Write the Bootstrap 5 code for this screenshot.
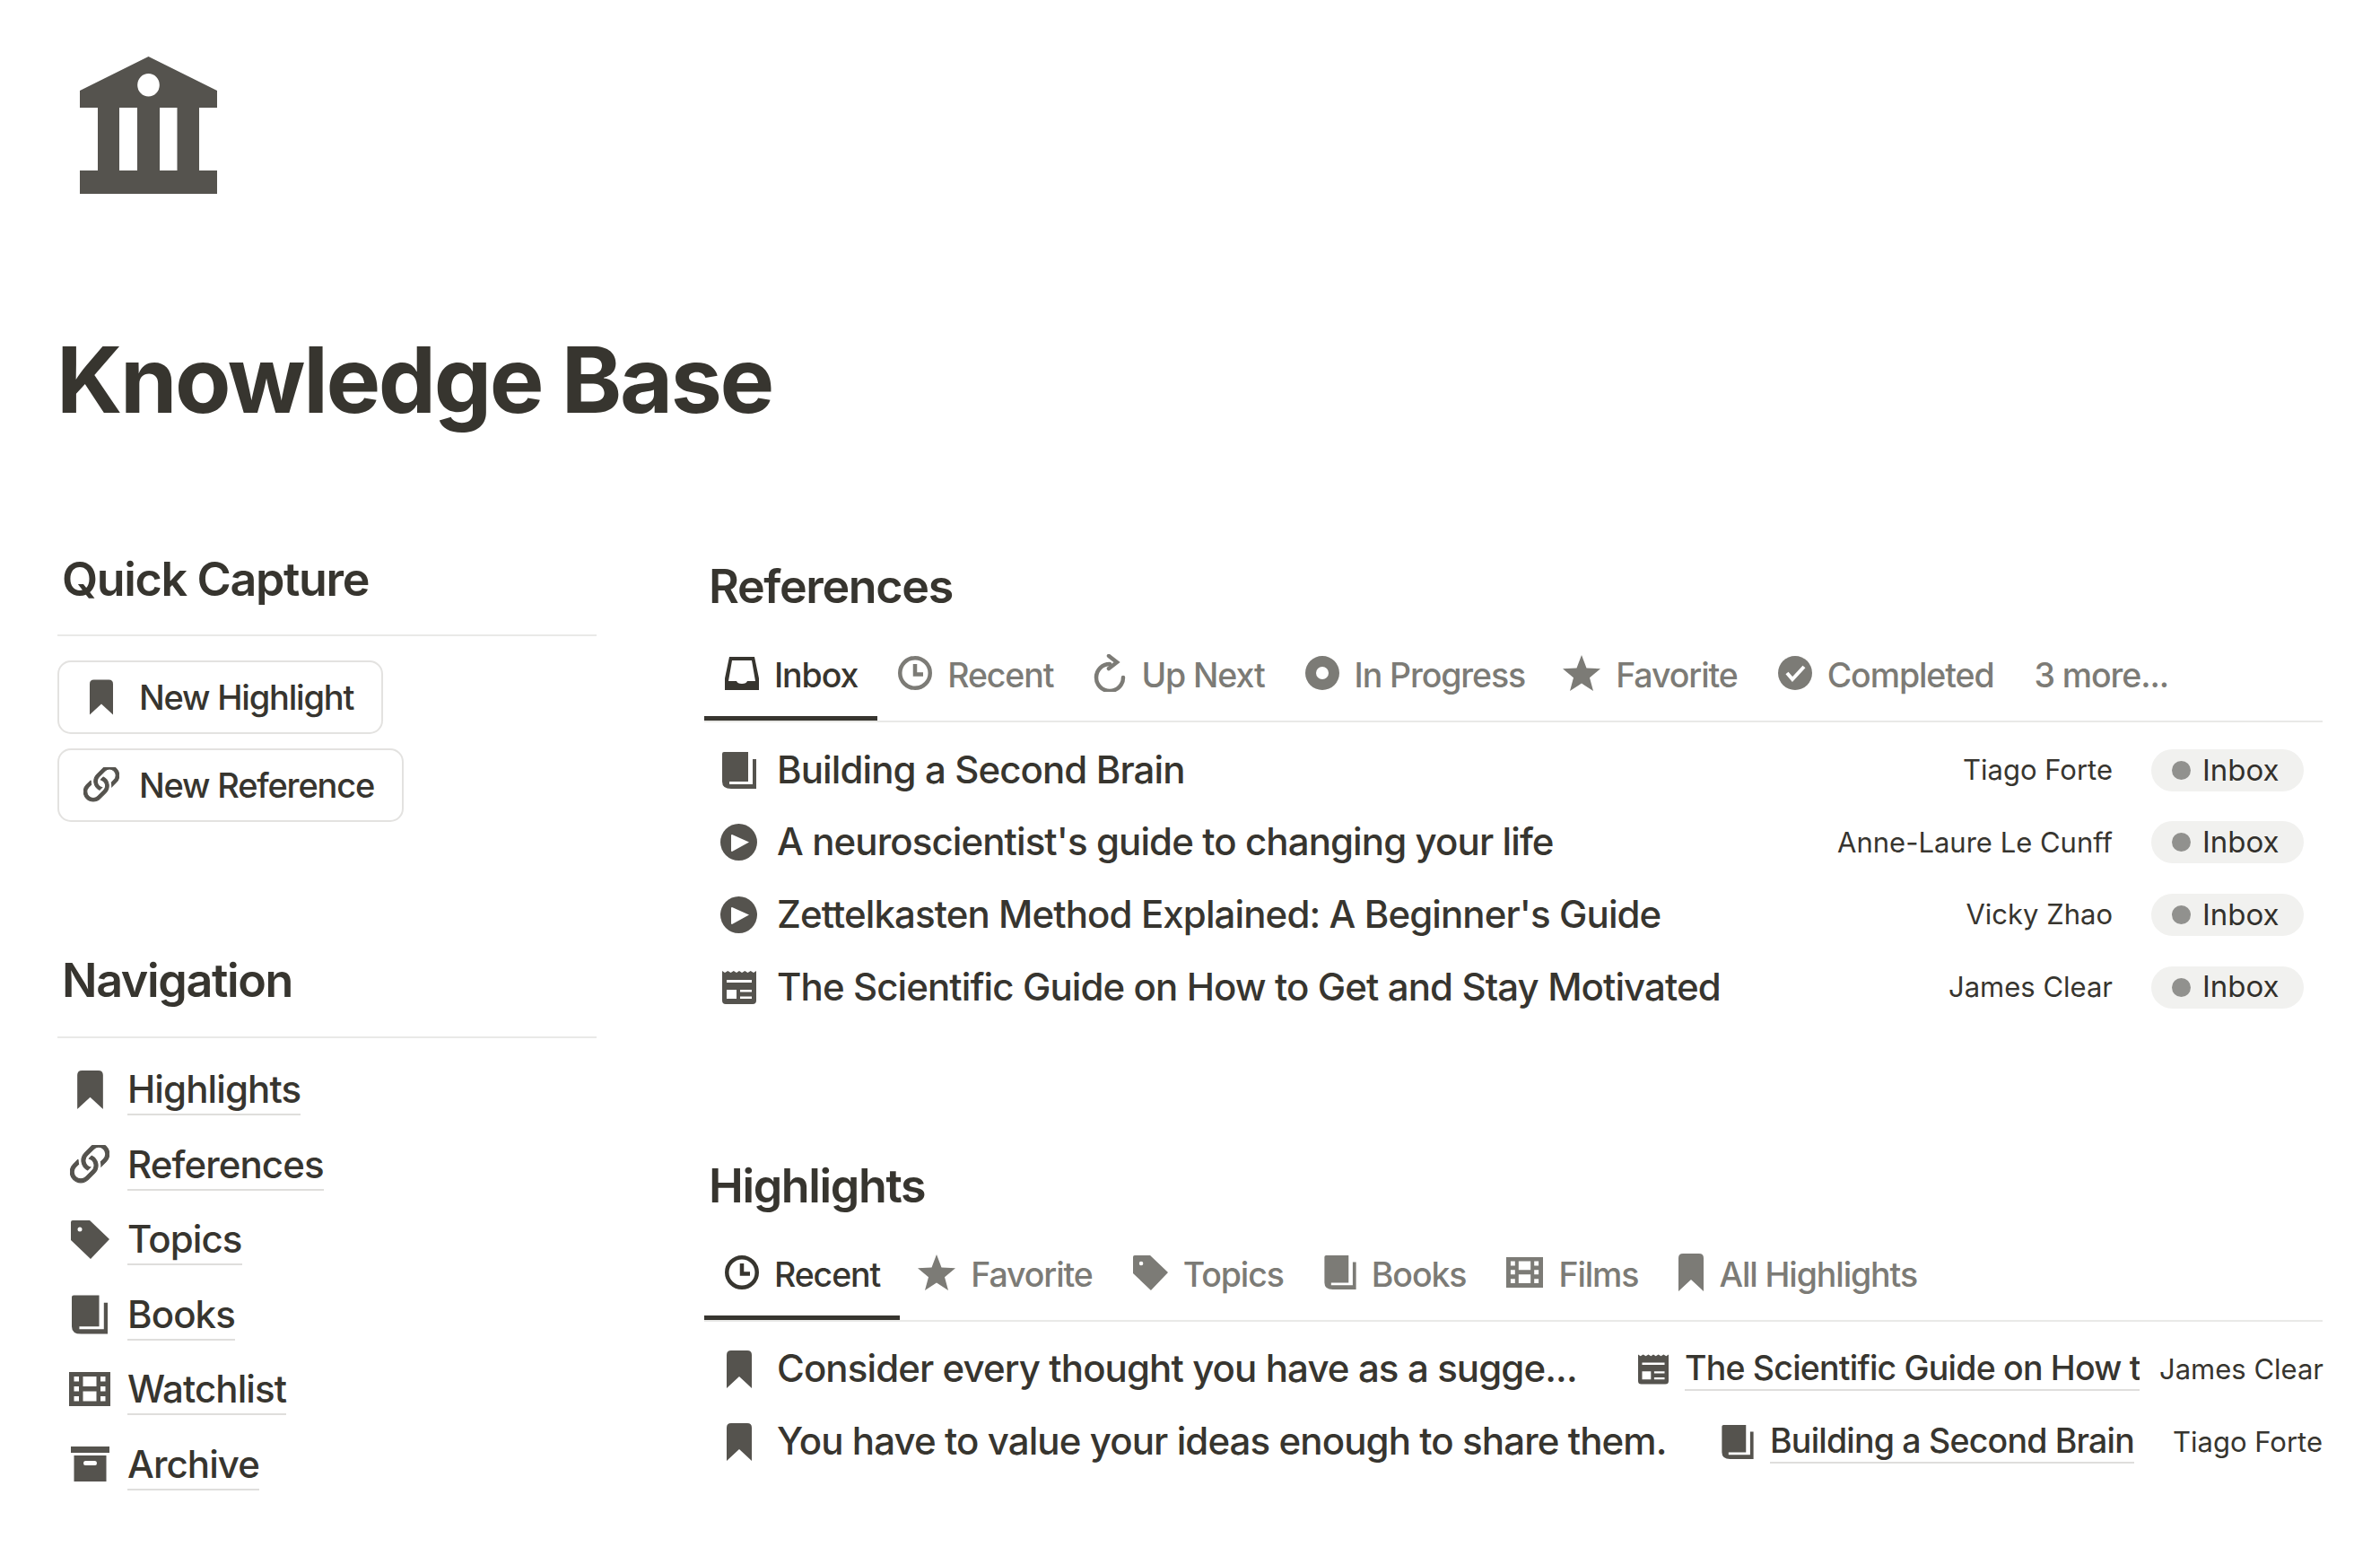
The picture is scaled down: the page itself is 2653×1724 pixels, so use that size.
<!DOCTYPE html>
<html lang="en">
<head>
<meta charset="utf-8">
<title>Knowledge Base</title>
<link href="https://cdn.jsdelivr.net/npm/bootstrap@5.3.0/dist/css/bootstrap.min.css" rel="stylesheet">
<style>
body{font-family:Inter,"Liberation Sans",sans-serif;color:#37352f;background:#fff;overflow:hidden}
a{color:inherit;text-decoration:none}
.kb-page{padding:63px 64px 0}
.kb-logo{display:block;margin-left:25px;color:#55534e}
.kb-title{font-size:102px;line-height:122px;font-weight:700;letter-spacing:-2.4px;margin:146px 0 132px -1px}
.kb-main{gap:120px}
.kb-left{width:601px;flex:none}
.kb-right{flex:1;min-width:0;padding-top:8px}
.kb-head{font-size:52px;line-height:60px;font-weight:600;letter-spacing:-1.35px;margin:0;padding-left:5px}
.kb-rule{border-top:2px solid #e9e9e7;margin:31px 0 27px}
.kb-rule-nav{margin:32px 0 32px}
.kb-btn{display:inline-flex;align-items:center;height:82px;padding:0 31px 0 26px;border:2px solid #e3e2e0;border-radius:15px;color:#37352f;font-size:38px;font-weight:500;letter-spacing:-1.2px;gap:21px;background:#fff}
.kb-btn:hover{color:#37352f;border-color:#e3e2e0}
.kb-ico{width:42px;display:flex;justify-content:center;align-items:center;flex:none;color:#55534e}
.kb-nav-head{margin-top:147px}
.kb-nav-row{height:83.6px;display:flex;align-items:flex-start;padding-left:12px;gap:18px}
.kb-nav-ico{width:48px;height:50px;display:flex;justify-content:center;align-items:center;color:#55534e;flex:none}
.kb-nav-link{font-size:42px;line-height:50px;font-weight:500;letter-spacing:-.9px;border-bottom:2px solid #dfdedc;padding-bottom:2px}
.kb-bar{border-bottom:2px solid #e9e9e7;height:99px;margin-top:22px;flex-wrap:nowrap}
.kb-tab{height:97px;padding:2px 22px 0 23px;display:flex;align-items:center;gap:17px;font-size:37.5px;font-weight:500;letter-spacing:-1.1px;color:#7c7b76;border-bottom:5px solid transparent;white-space:nowrap}
.kb-tab svg{margin-bottom:6px}
.kb-tab svg.kb-star{margin-left:-3px}
.kb-tab:hover{color:#7c7b76}
.kb-tab.active,.kb-tab.active:hover{color:#37352f;border-bottom-color:#37352f}
.kb-list{margin-top:13px}
.kb-row{height:80.6px;display:flex;align-items:center;padding:0 21px 0 18px}
.kb-row-ico{width:41px;display:flex;justify-content:center;margin-right:22px;flex:none;color:#55534e}
.kb-row-title{font-size:42px;font-weight:500;letter-spacing:-.9px;white-space:nowrap;padding-bottom:2px}
.kb-author{font-size:31px;color:#37352f;white-space:nowrap;margin-left:auto}
.kb-pill{width:170px;height:47px;margin-left:43px;border-radius:24px;background:#f1f1ef;display:flex;align-items:center;padding-left:23px;gap:13px;font-size:33px;font-weight:400;color:#32302c;flex:none}
.kb-dot{width:21px;height:21px;border-radius:50%;background:#91918e;flex:none}
.kb-sec2{margin-top:152px}
.kb-list2{margin-top:12px}
.kb-row2{height:81px;padding-right:0}
.kb-ref{margin-left:auto;display:flex;align-items:center;gap:18px;min-width:0}
.kb-ref-ico{display:flex;flex:none;color:#55534e}
.kb-ref-link{font-size:37.5px;line-height:46px;font-weight:500;letter-spacing:-.8px;white-space:nowrap;overflow:hidden;border-bottom:2px solid #dfdedc;display:block}
.kb-ref-clip{width:507px}
.kb-ref-pad{margin-right:6px}
.kb-auth-col{width:182px;margin-left:22px;text-align:right;font-size:31px;white-space:nowrap;flex:none}
</style>
</head>
<body>
<svg class="d-none" aria-hidden="true">
  <symbol id="i-bookmark" viewBox="0 0 28 42"><path fill="currentColor" d="M0 5Q0 0 5 0H23Q28 0 28 5V42L14 29 0 42Z"/></symbol>
  <symbol id="i-link" viewBox="2.4 2.4 11.2 11.2"><g fill="currentColor" stroke="currentColor" stroke-width=".3"><path d="M4.715 6.542 3.343 7.914a3 3 0 1 0 4.243 4.243l1.828-1.829A3 3 0 0 0 8.586 5.5L8 6.086a1.002 1.002 0 0 0-.154.199 2 2 0 0 1 .861 3.337L6.88 11.45a2 2 0 1 1-2.83-2.83l.793-.792a4.018 4.018 0 0 1-.128-1.287z"/><path d="M6.586 4.672A3 3 0 0 0 7.414 9.5l.775-.776a2 2 0 0 1-.896-3.346L9.12 3.55a2 2 0 1 1 2.83 2.83l-.793.792c.112.42.155.855.128 1.287l1.372-1.372a3 3 0 1 0-4.243-4.243L6.586 4.672z"/></g></symbol>
  <symbol id="i-tag" viewBox="0 0 43 43"><path fill="currentColor" fill-rule="evenodd" d="M2 0H21L43 21 22 43 0 22V2Q0 0 2 0ZM10 7.500A2.500 2.500 0 1 0 10 12.500 2.500 2.500 0 1 0 10 7.500Z"/></symbol>
  <symbol id="i-book" viewBox="0 0 38 41"><path fill="currentColor" fill-rule="evenodd" d="M2 0H29V8H38V41H10Q0 41 0 33V2Q0 0 2 0ZM29 8V33H8V36H34V8Z"/></symbol>
  <symbol id="i-film" viewBox="0 0 46 38"><path fill="currentColor" fill-rule="evenodd" d="M0 0H46V38H0ZM5.500 5V10.500H11V5ZM5.500 16V21.500H11V16ZM5.500 27V32.500H11V27ZM35 5V10.500H40.500V5ZM35 16V21.500H40.500V16ZM35 27V32.500H40.500V27ZM15.500 5V16H30.500V5ZM15.500 21.500V32.500H30.500V21.500Z"/></symbol>
  <symbol id="i-archive" viewBox="0 0 43 39"><path fill="currentColor" fill-rule="evenodd" d="M0 0H43V7H0ZM3.500 10H39.500V39H3.500ZM16 16Q14 16 14 18.500T16 21H27Q29 21 29 18.500T27 16Z"/></symbol>
  <symbol id="i-inbox" viewBox="0 0 38 37"><path fill="currentColor" fill-rule="evenodd" d="M5 0H33L38 24V37H0V24ZM8 4 4 27H13Q14 30 19 30T25 27H34L30 4Z"/></symbol>
  <symbol id="i-clock" viewBox="0 0 38 38"><circle cx="19" cy="19" r="16.750" fill="none" stroke="currentColor" stroke-width="4.500"/><path d="M19 9V20.500H28" fill="none" stroke="currentColor" stroke-width="4.500"/></symbol>
  <symbol id="i-next" viewBox="0 0 36 42"><path d="M18 11A15 15 0 1 0 33 26" fill="none" stroke="currentColor" stroke-width="4.500" stroke-linecap="round"/><path d="M17 2 26 9 17 16" fill="none" stroke="currentColor" stroke-width="4.500" stroke-linecap="round"/></symbol>
  <symbol id="i-progress" viewBox="0 0 38 38"><path fill="currentColor" fill-rule="evenodd" d="M19 0A19 19 0 1 0 19 38 19 19 0 1 0 19 0ZM19 12A7 7 0 1 1 19 26 7 7 0 1 1 19 12Z"/></symbol>
  <symbol id="i-star" viewBox="0 0 42 40"><path fill="currentColor" d="M21 0 26.500 14.500 42 15.300 30 25.200 34 40 21 31.600 8 40 12 25.200 0 15.300 15.500 14.500Z"/></symbol>
  <symbol id="i-check" viewBox="0 0 38 38"><circle cx="19" cy="19" r="19" fill="currentColor"/><path d="M10 19 16 26 29 12" fill="none" stroke="#fff" stroke-width="4"/></symbol>
  <symbol id="i-play" viewBox="0 0 41 41"><circle cx="20.500" cy="20.500" r="20.500" fill="currentColor"/><path d="M12 13Q12 12 13 12L32 20.500 13 31Q12 31 12 30Z" fill="#fff"/></symbol>
  <symbol id="i-news" viewBox="0 0 38 37"><path fill="currentColor" fill-rule="evenodd" d="M0 0 3 2 6.300 0 9.600 2 12.800 0 16 2 19 0 22 2 25.300 0 28.500 2 31.700 0 35 2 38 0V33Q38 37 34 37H4Q0 37 0 33ZM5 10V13H33V10ZM5 21V31H16V21ZM20 21V23.500H33V21ZM20 28.500V31H33V28.500Z"/></symbol>
</svg>

<div class="kb-page">
  <svg class="kb-logo" width="153" height="153" viewBox="0 0 153 153" aria-hidden="true"><path fill="currentColor" fill-rule="evenodd" d="M76.500 0 153 38V57H133V127H153V153H0V127H20V57H0V38ZM76.500 19A12.300 12.800 0 1 0 76.500 44.600 12.300 12.800 0 1 0 76.500 19ZM44 57V127H64V57ZM89 57V127H108.500V57Z"/></svg>

  <h1 class="kb-title">Knowledge Base</h1>

  <div class="d-flex kb-main">
    <div class="kb-left">
      <h2 class="kb-head">Quick Capture</h2>
      <div class="kb-rule"></div>
      <div class="d-flex flex-column align-items-start gap-3">
        <a href="#" class="btn kb-btn"><span class="kb-ico"><svg width="26" height="40"><use href="#i-bookmark"/></svg></span>New Highlight</a>
        <a href="#" class="btn kb-btn"><span class="kb-ico"><svg width="40" height="40"><use href="#i-link"/></svg></span>New Reference</a>
      </div>
      <h2 class="kb-head kb-nav-head">Navigation</h2>
      <div class="kb-rule kb-rule-nav"></div>
      <div class="kb-nav-row"><span class="kb-nav-ico"><svg width="29" height="43"><use href="#i-bookmark"/></svg></span><a href="#" class="kb-nav-link">Highlights</a></div>
      <div class="kb-nav-row"><span class="kb-nav-ico"><svg width="44" height="44"><use href="#i-link"/></svg></span><a href="#" class="kb-nav-link">References</a></div>
      <div class="kb-nav-row"><span class="kb-nav-ico"><svg width="43" height="43"><use href="#i-tag"/></svg></span><a href="#" class="kb-nav-link">Topics</a></div>
      <div class="kb-nav-row"><span class="kb-nav-ico"><svg width="40" height="44"><use href="#i-book"/></svg></span><a href="#" class="kb-nav-link">Books</a></div>
      <div class="kb-nav-row"><span class="kb-nav-ico"><svg width="46" height="38"><use href="#i-film"/></svg></span><a href="#" class="kb-nav-link">Watchlist</a></div>
      <div class="kb-nav-row"><span class="kb-nav-ico"><svg width="43" height="39"><use href="#i-archive"/></svg></span><a href="#" class="kb-nav-link">Archive</a></div>
    </div>

    <div class="kb-right">
      <h2 class="kb-head">References</h2>
      <nav class="nav kb-bar">
        <a href="#" class="nav-link kb-tab active"><svg width="38" height="37"><use href="#i-inbox"/></svg>Inbox</a>
        <a href="#" class="nav-link kb-tab"><svg width="38" height="38"><use href="#i-clock"/></svg>Recent</a>
        <a href="#" class="nav-link kb-tab"><svg width="36" height="42"><use href="#i-next"/></svg>Up Next</a>
        <a href="#" class="nav-link kb-tab"><svg width="38" height="38"><use href="#i-progress"/></svg>In Progress</a>
        <a href="#" class="nav-link kb-tab"><svg class="kb-star" width="42" height="40"><use href="#i-star"/></svg>Favorite</a>
        <a href="#" class="nav-link kb-tab"><svg width="38" height="38"><use href="#i-check"/></svg>Completed</a>
        <a href="#" class="nav-link kb-tab">3 more...</a>
      </nav>
      <div class="kb-list">
        <div class="kb-row"><span class="kb-row-ico"><svg width="38" height="41"><use href="#i-book"/></svg></span><span class="kb-row-title">Building a Second Brain</span><span class="kb-author">Tiago Forte</span><span class="kb-pill"><span class="kb-dot"></span>Inbox</span></div>
        <div class="kb-row"><span class="kb-row-ico"><svg width="41" height="41"><use href="#i-play"/></svg></span><span class="kb-row-title">A neuroscientist's guide to changing your life</span><span class="kb-author">Anne-Laure Le Cunff</span><span class="kb-pill"><span class="kb-dot"></span>Inbox</span></div>
        <div class="kb-row"><span class="kb-row-ico"><svg width="41" height="41"><use href="#i-play"/></svg></span><span class="kb-row-title">Zettelkasten Method Explained: A Beginner's Guide</span><span class="kb-author">Vicky Zhao</span><span class="kb-pill"><span class="kb-dot"></span>Inbox</span></div>
        <div class="kb-row"><span class="kb-row-ico"><svg width="38" height="37"><use href="#i-news"/></svg></span><span class="kb-row-title">The Scientific Guide on How to Get and Stay Motivated</span><span class="kb-author">James Clear</span><span class="kb-pill"><span class="kb-dot"></span>Inbox</span></div>
      </div>

      <h2 class="kb-head kb-sec2">Highlights</h2>
      <nav class="nav kb-bar">
        <a href="#" class="nav-link kb-tab active"><svg width="38" height="38"><use href="#i-clock"/></svg>Recent</a>
        <a href="#" class="nav-link kb-tab"><svg class="kb-star" width="42" height="40"><use href="#i-star"/></svg>Favorite</a>
        <a href="#" class="nav-link kb-tab"><svg width="39" height="39"><use href="#i-tag"/></svg>Topics</a>
        <a href="#" class="nav-link kb-tab"><svg width="36" height="38"><use href="#i-book"/></svg>Books</a>
        <a href="#" class="nav-link kb-tab"><svg width="41" height="34"><use href="#i-film"/></svg>Films</a>
        <a href="#" class="nav-link kb-tab"><svg width="28" height="42"><use href="#i-bookmark"/></svg>All Highlights</a>
      </nav>
      <div class="kb-list2">
        <div class="kb-row kb-row2"><span class="kb-row-ico"><svg width="28" height="42"><use href="#i-bookmark"/></svg></span><span class="kb-row-title">Consider every thought you have as a sugge...</span><span class="kb-ref"><span class="kb-ref-ico"><svg width="34" height="34"><use href="#i-news"/></svg></span><a href="#" class="kb-ref-link kb-ref-clip">The Scientific Guide on How to Get and Stay Motivated</a></span><span class="kb-auth-col">James Clear</span></div>
        <div class="kb-row kb-row2"><span class="kb-row-ico"><svg width="28" height="42"><use href="#i-bookmark"/></svg></span><span class="kb-row-title">You have to value your ideas enough to share them.</span><span class="kb-ref kb-ref-pad"><span class="kb-ref-ico"><svg width="36" height="38"><use href="#i-book"/></svg></span><a href="#" class="kb-ref-link">Building a Second Brain</a></span><span class="kb-auth-col">Tiago Forte</span></div>
      </div>
    </div>
  </div>
</div>
<script src="https://cdn.jsdelivr.net/npm/bootstrap@5.3.0/dist/js/bootstrap.bundle.min.js"></script>
</body>
</html>
